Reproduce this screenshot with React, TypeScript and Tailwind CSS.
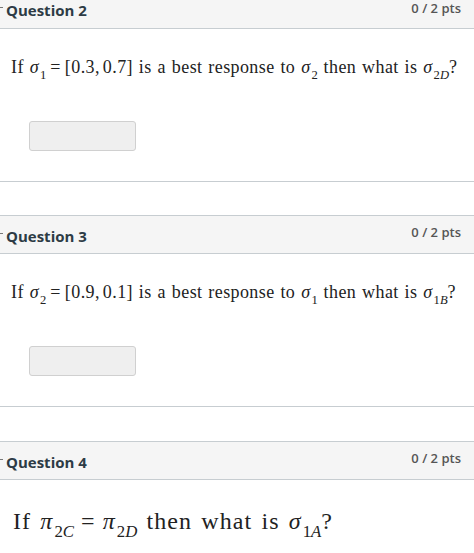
import React from "react"

const serif = { fontFamily: '"Liberation Serif", "DejaVu Serif", serif' }

function Sub({ children }: { children: React.ReactNode }) {
  return <sub className="ml-[1px] text-[0.7em] leading-none align-[-0.2em] tracking-normal">{children}</sub>
}

function Eq() {
  return <span className="mx-[4px]">=</span>
}

function Header({ title, first }: { title: string; first?: boolean }) {
  return (
    <div
      className={`flex h-[39px] items-start justify-between border-b border-[#c7cdd1] bg-[#f5f5f5] pr-[13px] ${
        first ? "-mt-[10px]" : "border-t"
      }`}
      style={{ fontFamily: '"Open Sans", sans-serif' }}
    >
      <div className="flex items-start">
        <span className="mt-[17px] h-[1px] w-[3px] bg-[#777]" />
        <span className="ml-[3px] mt-[13px] text-[15px] font-bold leading-none text-[#2d3b45]">
          {title}
        </span>
      </div>
      <span className={`${first ? "mt-[12px]" : "mt-[10px]"} text-[13px] font-semibold leading-none text-[#555]`}>
        0 / 2 pts
      </span>
    </div>
  )
}

function Answer() {
  return <div className="ml-[29px] mt-[29px] h-[30px] w-[107px] rounded-[3px] border border-[#d0d0d0] bg-[#efefef]" />
}

export default function App() {
  return (
    <div className="h-[553px] w-[474px] overflow-hidden bg-white text-[#222]">
      <Header title="Question 2" first />
      <div className="pt-[27px]" style={serif}>
        <p className="ml-[11px] h-[36px] whitespace-nowrap text-[18px] leading-[22px] tracking-[0.4px] [word-spacing:1px]">
          If <i>σ</i>
          <Sub>1</Sub>
          <Eq />
          [0.3<span className="mr-[3px]">,</span>0.7] is a best response to <i>σ</i>
          <Sub>2</Sub> then what is <i>σ</i>
          <Sub>
            2<i>D</i>
          </Sub>
          ?
        </p>
        <Answer />
      </div>
      <div className="mt-[30px] border-t border-[#c7cdd1]" />
      <div className="h-[33px]" />

      <Header title="Question 3" />
      <div className="pt-[27px]" style={serif}>
        <p className="ml-[11px] h-[36px] whitespace-nowrap text-[18px] leading-[22px] tracking-[0.4px] [word-spacing:1px]">
          If <i>σ</i>
          <Sub>2</Sub>
          <Eq />
          [0.9<span className="mr-[3px]">,</span>0.1] is a best response to <i>σ</i>
          <Sub>1</Sub> then what is <i>σ</i>
          <Sub>
            1<i>B</i>
          </Sub>
          ?
        </p>
        <Answer />
      </div>
      <div className="mt-[30px] border-t border-[#c7cdd1]" />
      <div className="h-[34px]" />

      <Header title="Question 4" />
      <div className="pt-[27px]" style={serif}>
        <p className="ml-[13px] whitespace-nowrap text-[24px] leading-[28px] tracking-[1.1px] [word-spacing:2px]">
          If <i>π</i>
          <Sub>
            2<i>C</i>
          </Sub>
          <span className="mx-[7px]">=</span>
          <i>π</i>
          <Sub>
            2<i>D</i>
          </Sub>{" "}
          then what is <i>σ</i>
          <Sub>
            1<i>A</i>
          </Sub>
          ?
        </p>
      </div>
    </div>
  )
}
